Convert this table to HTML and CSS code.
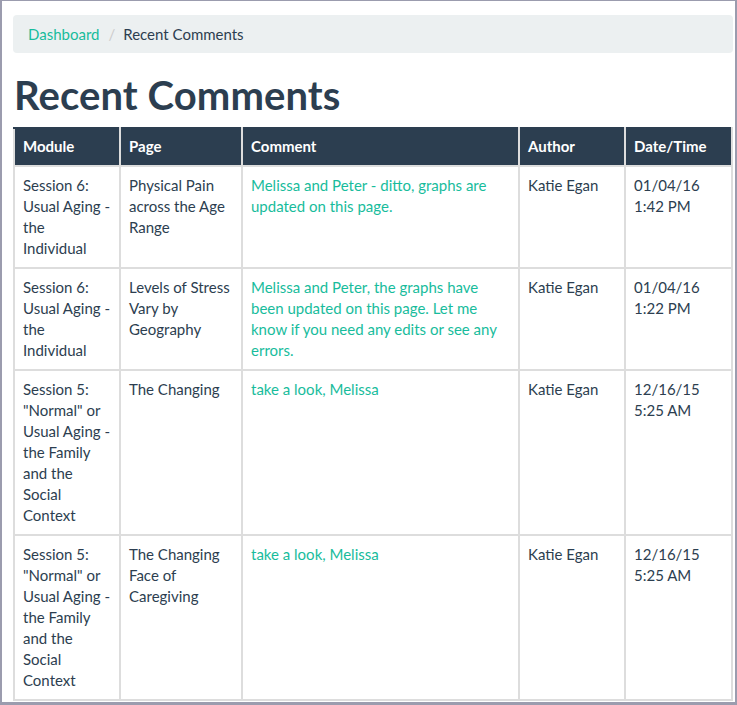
FILE: index.html
```html
<!DOCTYPE html>
<html>
<head>
<meta charset="utf-8">
<link rel="stylesheet" href="styles.css">
</head>
<body>
<div class="page">
  <ol class="breadcrumb">
    <li><a href="#">Dashboard</a></li>
    <li class="sep">/</li>
    <li class="active">Recent Comments</li>
  </ol>
  <h1 class="title">Recent Comments</h1>
  <table class="comments">
    <colgroup>
      <col class="c-module">
      <col class="c-page">
      <col class="c-comment">
      <col class="c-author">
      <col class="c-date">
    </colgroup>
    <thead>
      <tr><th>Module</th><th>Page</th><th>Comment</th><th>Author</th><th>Date/Time</th></tr>
    </thead>
    <tbody>
      <tr>
        <td>Session 6: Usual Aging - the Individual</td>
        <td>Physical Pain across the Age Range</td>
        <td><a href="#">Melissa and Peter - ditto, graphs are updated on this page.</a></td>
        <td>Katie Egan</td>
        <td>01/04/16<br>1:42 PM</td>
      </tr>
      <tr>
        <td>Session 6: Usual Aging - the Individual</td>
        <td>Levels of Stress Vary by Geography</td>
        <td><a href="#">Melissa and Peter, the graphs have been updated on this page. Let me know if you need any edits or see any errors.</a></td>
        <td>Katie Egan</td>
        <td>01/04/16<br>1:22 PM</td>
      </tr>
      <tr>
        <td>Session 5: "Normal" or Usual Aging - the Family and the Social Context</td>
        <td>The Changing</td>
        <td><a href="#">take a look, Melissa</a></td>
        <td>Katie Egan</td>
        <td>12/16/15<br>5:25 AM</td>
      </tr>
      <tr>
        <td>Session 5: "Normal" or Usual Aging - the Family and the Social Context</td>
        <td>The Changing Face of Caregiving</td>
        <td><a href="#">take a look, Melissa</a></td>
        <td>Katie Egan</td>
        <td>12/16/15<br>5:25 AM</td>
      </tr>
    </tbody>
  </table>
</div>
</body>
</html>
```

FILE: styles.css
```css
html, body {
  margin: 0;
  padding: 0;
  background: #ffffff;
}
body {
  font-family: Lato, "Open Sans", sans-serif;
  font-size: 15px;
  line-height: 21px;
  color: #2c3e50;
  overflow: hidden;
}
body::after {
  content: "";
  position: fixed;
  left: 0;
  top: 0;
  right: 0;
  bottom: 0;
  border-style: solid;
  border-color: #9b9cae;
  border-width: 1px 2px 3px 2px;
  pointer-events: none;
}
a {
  color: #18bc9c;
  text-decoration: none;
}
.page {
  padding: 15px 4px 0 13px;
}
.breadcrumb {
  list-style: none;
  margin: 0 0 21px 0;
  padding: 9px 15px 8px 15px;
  background: #ecf0f1;
  border-radius: 4px;
  display: flex;
  align-items: center;
}
.breadcrumb li {
  margin: 0;
}
.breadcrumb .sep {
  color: #cccccc;
  padding: 0 8px 0 9px;
}
.breadcrumb .active {
  color: #2c3e50;
}
.title {
  margin: 0 0 10px 1px;
  font-size: 40px;
  line-height: 43px;
  font-weight: 700;
  color: #2c3e50;
  letter-spacing: 0.1px;
}
.comments {
  margin-left: 0;
  width: 718px;
  table-layout: fixed;
  border-collapse: collapse;
}
.c-module { width: 106px; }
.c-page { width: 122px; }
.c-comment { width: 277px; }
.c-author { width: 106px; }
.c-date { width: 107px; }
.comments th,
.comments td {
  border: 2px solid #dddddd;
  padding: 8px 8px;
  text-align: left;
  vertical-align: top;
}
.comments th {
  background: #2c3e50;
  color: #ffffff;
  font-weight: 700;
  padding: 7px 8px 8px 8px;
  border-bottom-color: #dddddd;
}
.comments thead th {
  border-top-color: #2c3e50;
}
```
